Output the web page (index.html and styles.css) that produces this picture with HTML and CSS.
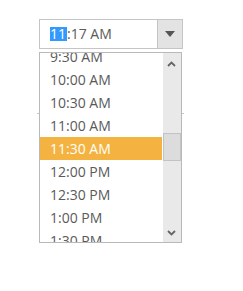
FILE: index.html
```html
<!DOCTYPE html>
<html lang="en">

<head>
    <meta charset="UTF-8">
    <title>Tidsvælger</title>
    <link rel="stylesheet" href="styles.css">
</head>

<body>

    <div class="vaelger">
        <div class="felt">
            <div class="tekst"><span class="markeret">11</span>:17 AM</div>
            <div class="knap">
                <svg width="10" height="6" viewBox="0 0 10 6"><path d="M0 0 H10 L5 6 Z" fill="#555"/></svg>
            </div>
        </div>

        <!-- linjen bagved listen -->
        <div class="linje"></div>

        <div class="liste">
            <ul>
                <li>9:30 AM</li>
                <li>10:00 AM</li>
                <li>10:30 AM</li>
                <li>11:00 AM</li>
                <li class="valgt">11:30 AM</li>
                <li>12:00 PM</li>
                <li>12:30 PM</li>
                <li>1:00 PM</li>
                <li>1:30 PM</li>
            </ul>
            <div class="rullebjaelke">
                <svg class="pil op" width="9" height="6" viewBox="0 0 9 6"><path d="M1 5 L4.5 1.5 L8 5" fill="none" stroke="#666" stroke-width="1.8"/></svg>
                <div class="greb"></div>
                <svg class="pil ned" width="9" height="6" viewBox="0 0 9 6"><path d="M1 1 L4.5 4.5 L8 1" fill="none" stroke="#666" stroke-width="1.8"/></svg>
            </div>
        </div>
    </div>

</body>

</html>
```

FILE: styles.css
```css
body {
    margin: 0;
    padding: 19px 0 49px 39px;
    font-family: "Open Sans", "Noto Sans", sans-serif;
    font-size: 14px;
    color: #5a5a5a;
    background: #fff;
}

.vaelger {
    position: relative;
    width: 144px;
}

.felt {
    display: flex;
    height: 28px;
    border: 1px solid #c5c5c5;
    background: #fff;
}

.tekst {
    flex: 1;
    padding-left: 10px;
    line-height: 28px;
}

.markeret {
    background: #3399ff;
    color: #fff;
    display: inline-block;
    line-height: 14px;
    padding-right: 1px;
}

.knap {
    width: 24px;
    border-left: 1px solid #c5c5c5;
    background: #e3e3e3;
    display: flex;
    align-items: center;
    justify-content: center;
}

.linje {
    position: absolute;
    top: 94px;
    left: -2px;
    width: 147px;
    height: 1px;
    background: #c8c8c8;
}

.liste {
    position: relative;
    margin-top: 3px;
    width: 141px;
    height: 189px;
    border: 1px solid #b9b9b9;
    background: #fff;
    overflow: hidden;
    display: flex;
}

.liste ul {
    list-style: none;
    margin: -8px 1px 0 0;
    padding: 0;
    width: 122px;
}

.liste li {
    height: 23px;
    line-height: 23px;
    padding-left: 10px;
}

.liste li.valgt {
    background: #f4b340;
    color: #fff;
}

.rullebjaelke {
    position: relative;
    width: 18px;
    background: #e9e9ea;
}

.pil {
    position: absolute;
    left: 4px;
}

.op {
    top: 8px;
}

.ned {
    bottom: 6px;
}

.greb {
    position: absolute;
    top: 80px;
    left: 0;
    width: 16px;
    height: 26px;
    background: #dcdcdc;
    border: 1px solid #c3c3c3;
}
```
